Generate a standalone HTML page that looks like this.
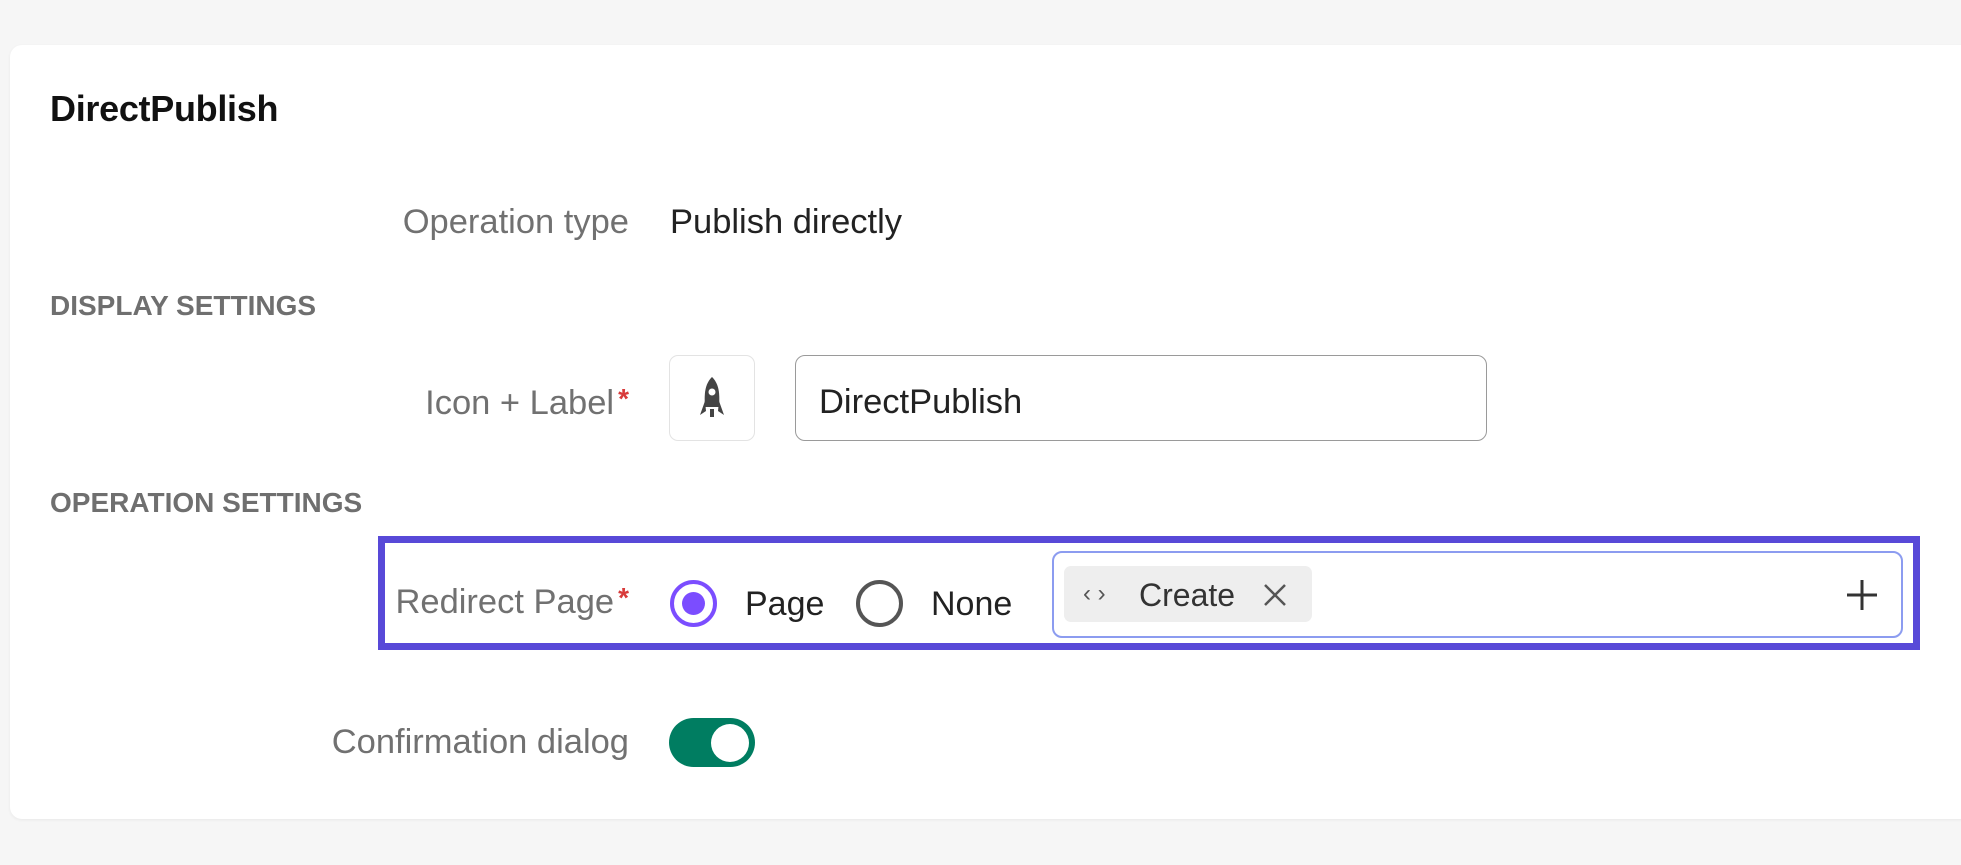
<!DOCTYPE html>
<html><head><meta charset="utf-8"><style>
*{box-sizing:border-box;margin:0;padding:0}
body{width:1961px;height:865px;background:#f6f6f6;font-family:"Liberation Sans",sans-serif;position:relative;overflow:hidden}
.card{position:absolute;left:10px;top:45px;width:1970px;height:774px;background:#fff;border-radius:12px;box-shadow:0 1px 3px rgba(0,0,0,.06)}
.a{position:absolute;white-space:nowrap;line-height:1}
.lbl{color:#717171;font-size:34.5px;text-align:right;right:1332px}
.sec{color:#6f6f6f;font-size:28px;font-weight:bold;left:50px}
.req{color:#d83b3b;font-size:28px;font-weight:bold;margin-left:4px;position:relative;top:-6px}
</style></head><body>
<div class="card"></div>
<div class="a" style="left:50px;top:91px;font-size:36px;font-weight:bold;color:#111;letter-spacing:-0.3px">DirectPublish</div>
<div class="a lbl" style="top:205px">Operation type</div>
<div class="a" style="left:670px;top:205px;font-size:34.5px;color:#222">Publish directly</div>
<div class="a sec" style="top:292px">DISPLAY SETTINGS</div>
<div class="a lbl" style="top:386px;right:1332px">Icon + Label<span class="req">*</span></div>
<div class="a" style="left:669px;top:355px;width:86px;height:86px;border:1.5px solid #e3e3e3;border-radius:9px"></div>
<svg class="a" style="left:694px;top:375px" width="36" height="46" viewBox="0 0 36 46"><path d="M18 2C11 9 10 18 11 32H25C26 18 25 9 18 2Z" fill="#444"/><circle cx="18" cy="17" r="3.5" fill="#fff"/><path d="M11 26L6 40L12 36ZM25 26L30 40L24 36Z" fill="#444"/><rect x="16" y="34" width="4" height="8" fill="#444"/></svg>
<div class="a" style="left:795px;top:355px;width:692px;height:86px;border:1.5px solid #9a9a9a;border-radius:10px"></div>
<div class="a" style="left:819px;top:385px;font-size:34.5px;color:#222">DirectPublish</div>
<div class="a sec" style="top:489px">OPERATION SETTINGS</div>
<div class="a" style="left:378px;top:536px;width:1542px;height:114px;border:7px solid #5849d8"></div>
<div class="a lbl" style="top:585px">Redirect Page<span class="req">*</span></div>
<div class="a" style="left:670px;top:580px;width:47px;height:47px;border:4.5px solid #7b4dff;border-radius:50%"></div>
<div class="a" style="left:682px;top:592px;width:23px;height:23px;background:#7b4dff;border-radius:50%"></div>
<div class="a" style="left:745px;top:587px;font-size:34px;color:#222">Page</div>
<div class="a" style="left:856px;top:580px;width:47px;height:47px;border:4px solid #555;border-radius:50%"></div>
<div class="a" style="left:931px;top:587px;font-size:34px;color:#222">None</div>
<div class="a" style="left:1052px;top:551px;width:851px;height:87px;border:2px solid #8c9cf0;border-radius:10px"></div>
<div class="a" style="left:1064px;top:566px;width:248px;height:56px;background:#eeeeee;border-radius:7px"></div>
<div class="a" style="left:1083px;top:582px;font-size:24px;color:#555">‹ ›</div>
<div class="a" style="left:1139px;top:579px;font-size:32px;color:#333">Create</div>
<svg class="a" style="left:1262px;top:582px" width="26" height="26" viewBox="0 0 26 26"><path d="M3 3L23 23M23 3L3 23" stroke="#555" stroke-width="2.5"/></svg>
<svg class="a" style="left:1845px;top:578px" width="34" height="34" viewBox="0 0 34 34"><path d="M17 2V32M2 17H32" stroke="#333" stroke-width="3"/></svg>
<div class="a lbl" style="top:725px">Confirmation dialog</div>
<div class="a" style="left:669px;top:718px;width:86px;height:49px;background:#007d61;border-radius:25px"></div>
<div class="a" style="left:711px;top:724px;width:38px;height:38px;background:#fff;border-radius:50%"></div>
</body></html>
